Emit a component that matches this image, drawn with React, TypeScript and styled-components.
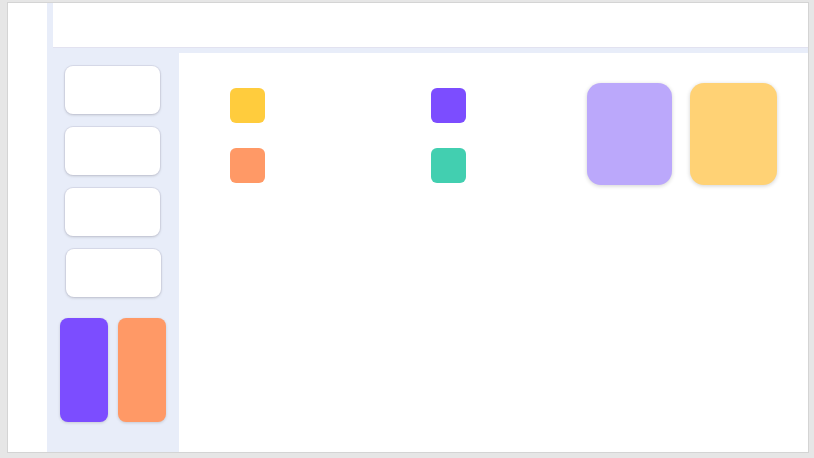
import styled, { createGlobalStyle } from 'styled-components';

const GlobalStyle = createGlobalStyle`
  html, body {
    margin: 0;
    padding: 0;
    background: #e6e6e6;
    font-family: 'Liberation Sans', Arial, sans-serif;
  }
`;

const Frame = styled.div`
  margin: 2px 0 0 7px;
  width: 802px;
  height: 451px;
  box-sizing: border-box;
  border: 1px solid #d4d4d4;
  background: #ffffff;
  display: flex;
`;

const Gutter = styled.div`
  width: 39px;
  background: #ffffff;
`;

const Workspace = styled.div`
  flex: 1;
  display: flex;
  flex-direction: column;
  background: #e8edf9;
`;

const Header = styled.div`
  height: 44px;
  margin-left: 6px;
  background: #ffffff;
  border-bottom: 1px solid #e2e2f0;
`;

const Body = styled.div`
  flex: 1;
  display: flex;
  margin-top: 5px;
`;

const Sidebar = styled.div`
  width: 132px;
  box-sizing: border-box;
  padding: 13px 0 0 13px;
  display: flex;
  flex-direction: column;
`;

const Slot = styled.div<{ $offset?: number }>`
  width: 95px;
  height: 48px;
  margin: 0 0 13px ${(p) => 5 + (p.$offset ?? 0)}px;
  background: #ffffff;
  border-radius: 8px;
  box-shadow: 0 0 0 1px rgba(190, 190, 210, 0.35), 0 1px 3px rgba(0, 0, 0, 0.18);
`;

const TallRow = styled.div`
  display: flex;
  gap: 10px;
  margin-top: 8px;
`;

const TallCard = styled.div<{ $color: string }>`
  width: 48px;
  height: 104px;
  border-radius: 8px;
  background: ${(p) => p.$color};
  box-shadow: 0 1px 3px rgba(0, 0, 0, 0.15);
`;

const Main = styled.div`
  flex: 1;
  background: #ffffff;
  display: flex;
  align-items: flex-start;
  padding: 30px 31px 0 51px;
`;

const Swatches = styled.div`
  display: grid;
  grid-template-columns: 35px 35px;
  column-gap: 166px;
  row-gap: 25px;
  margin-top: 5px;
`;

const Swatch = styled.div<{ $color: string }>`
  width: 35px;
  height: 35px;
  border-radius: 6px;
  background: ${(p) => p.$color};
`;

const BigCards = styled.div`
  margin-left: auto;
  display: flex;
  gap: 18px;
`;

const BigCard = styled.div<{ $color: string; $width: number }>`
  width: ${(p) => p.$width}px;
  height: 102px;
  border-radius: 14px;
  background: ${(p) => p.$color};
  box-shadow: 0 1px 4px rgba(0, 0, 0, 0.18);
`;

const swatches = ['#ffcc3d', '#7c4dff', '#ff9966', '#42cfb0'];

export default function App() {
  return (
    <>
      <GlobalStyle />
      <Frame>
        <Gutter />
        <Workspace>
          <Header />
          <Body>
            <Sidebar>
              <Slot />
              <Slot />
              <Slot />
              <Slot $offset={1} />
              <TallRow>
                <TallCard $color="#7c4dff" />
                <TallCard $color="#ff9966" />
              </TallRow>
            </Sidebar>
            <Main>
              <Swatches>
                {swatches.map((c) => (
                  <Swatch key={c} $color={c} />
                ))}
              </Swatches>
              <BigCards>
                <BigCard $color="#bba8fb" $width={85} />
                <BigCard $color="#ffd275" $width={87} />
              </BigCards>
            </Main>
          </Body>
        </Workspace>
      </Frame>
    </>
  );
}
